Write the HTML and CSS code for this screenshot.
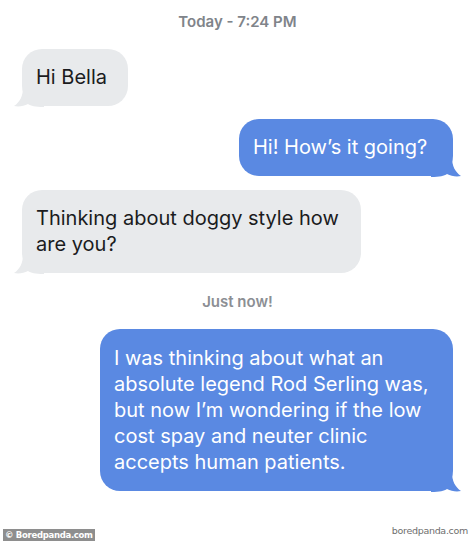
FILE: index.html
```html
<!DOCTYPE html>
<html lang="en">
<head>
    <meta charset="UTF-8">
    <meta name="viewport" content="width=device-width, initial-scale=1.0">
    <title>Messages</title>
    <link rel="stylesheet" href="styles.css">
</head>
<body>
    <div class="thread">
        <div class="stamp stamp-top">Today - 7:24 PM</div>

        <div class="row row-in">
            <div class="bubble bubble-in bubble-short">
                Hi Bella
                <svg class="tail tail-in" width="30" height="20" viewBox="0 0 30 20"><path d="M9 0 C9 9 6 15 0 19 C5 20 10 19 14 17 C17 19 21 20 30 20 L30 0 Z"/></svg>
            </div>
        </div>

        <div class="row row-out">
            <div class="bubble bubble-out bubble-going">
                Hi! How’s it going?
                <svg class="tail tail-out" width="30" height="20" viewBox="0 0 30 20"><path d="M9 0 C9 9 6 15 0 19 C5 20 10 19 14 17 C17 19 21 20 30 20 L30 0 Z"/></svg>
            </div>
        </div>

        <div class="row row-in">
            <div class="bubble bubble-in bubble-doggy">
                Thinking about doggy style how<br>are you?
                <svg class="tail tail-in" width="30" height="20" viewBox="0 0 30 20"><path d="M9 0 C9 9 6 15 0 19 C5 20 10 19 14 17 C17 19 21 20 30 20 L30 0 Z"/></svg>
            </div>
        </div>

        <div class="stamp stamp-now">Just now!</div>

        <div class="row row-out row-last">
            <div class="bubble bubble-out bubble-long">
                I was thinking about what an<br>absolute legend Rod Serling was,<br>but now I’m wondering if the low<br>cost spay and neuter clinic<br>accepts human patients.
                <svg class="tail tail-out" width="30" height="20" viewBox="0 0 30 20"><path d="M9 0 C9 9 6 15 0 19 C5 20 10 19 14 17 C17 19 21 20 30 20 L30 0 Z"/></svg>
            </div>
        </div>
    </div>

    <div class="credits">
        <span class="credit-badge">© Boredpanda.com</span>
        <span class="credit-mark">boredpanda.com</span>
    </div>
</body>
</html>
```

FILE: styles.css
```css
body {
    margin: 0;
    padding: 0;
    background-color: #ffffff;
    font-family: Inter, "Open Sans", sans-serif;
    width: 474px;
    height: 542px;
    overflow: hidden;
}

.thread {
    display: flex;
    flex-direction: column;
    padding: 0 21px 0 22px;
}

.stamp {
    text-align: center;
    color: #80848a;
    font-size: 15px;
    font-weight: 600;
    line-height: 20px;
}

.stamp-top {
    margin-top: 12px;
    margin-bottom: 17px;
}

.stamp-now {
    margin-top: 19px;
    margin-bottom: 4px;
    color: #8c8f94;
    font-size: 15px;
}

.row {
    display: flex;
}

.row-in {
    justify-content: flex-start;
}

.row-out {
    justify-content: flex-end;
    margin-top: 13px;
    margin-bottom: 14px;
}

.row-last {
    margin-bottom: 0;
}

.bubble {
    position: relative;
    font-size: 20px;
    line-height: 26px;
    padding: 15px 14px 16px 14px;
    border-radius: 20px;
}

.bubble-in {
    background-color: #e8eaec;
    color: #1b1c1e;
}

.bubble-out {
    background-color: #5a89e2;
    color: #ffffff;
}

.bubble-short {
    width: 78px;
}

.bubble-going {
    width: 186px;
}

.bubble-doggy {
    width: 311px;
}

.bubble-long {
    width: 325px;
    padding-top: 16px;
    padding-bottom: 16px;
}

.tail {
    position: absolute;
    bottom: -1px;
}

.tail-in {
    left: -8px;
    fill: #e8eaec;
}

.tail-out {
    right: -8px;
    fill: #5a89e2;
    transform: scaleX(-1);
}

.credits {
    display: flex;
    justify-content: space-between;
    align-items: flex-end;
    margin-top: 34px;
    padding: 0 6px 0 3px;
}

.credit-badge {
    background-color: #8e8e8e;
    color: #ffffff;
    font-family: "DejaVu Sans", sans-serif;
    font-size: 8.5px;
    font-weight: bold;
    line-height: 12px;
    padding: 0 2px;
    letter-spacing: -0.3px;
}

.credit-mark {
    color: #6e6e6e;
    font-family: "DejaVu Sans", sans-serif;
    font-size: 9.5px;
    line-height: 12px;
    margin-bottom: 4px;
    letter-spacing: -0.3px;
}
```
